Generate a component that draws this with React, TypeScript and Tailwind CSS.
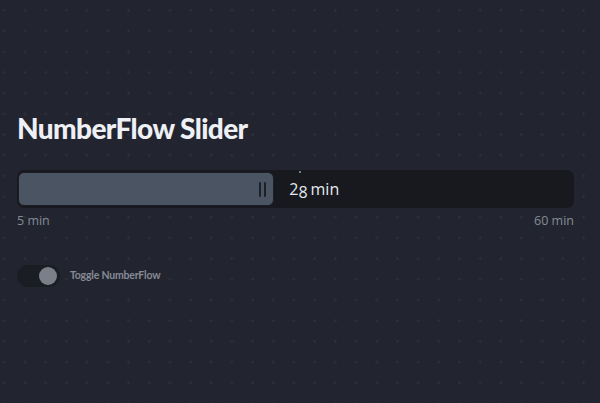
import React, { useState } from "react";

const App = () => {
  const [on, setOn] = useState(false);
  const fill = 46;

  return (
    <div className="min-h-[403px] w-full bg-[#22252f] bg-[radial-gradient(circle,#2c303b_1px,transparent_1.5px)] bg-[size:20.7px_20.7px] bg-[position:-6px_0px] font-['Open_Sans',sans-serif]">
      <div className="pl-[17px] pr-[26px] pt-[111px]">
        <h1 className="font-['Lato',sans-serif] text-[28px] font-black leading-[34px] tracking-[-0.6px] text-[#eef0f6]">
          NumberFlow Slider
        </h1>

        {/* slider */}
        <div className="mt-[25px]">
          <div className="relative flex h-[38px] w-full items-center rounded-[7px] bg-[#17191e]">
            <div
              className="absolute left-[1px] top-[2px] bottom-[2px] flex items-center justify-end rounded-[6px] border border-[#1b1e24] bg-[#4a5462] pr-[7px]"
              style={{ width: `${fill}%` }}
            >
              <div className="flex gap-[3px]">
                <span className="h-[15px] w-[2px] rounded-sm bg-[#1d2027]" />
                <span className="h-[15px] w-[2px] rounded-sm bg-[#1d2027]" />
              </div>
            </div>
            <div
              className="absolute top-0 bottom-0 flex items-center text-[16px] font-medium text-[#e6e8ee]"
              style={{ left: `calc(${fill}% + 16px)` }}
            >
              <span className="relative">
                2
                <span className="relative top-[3px]">8</span>
                <span className="absolute left-[10px] top-[-6px] h-[2px] w-[2px] rounded-full bg-[#9aa0ab]" />
              </span>
              <span className="ml-[3px]">min</span>
            </div>
          </div>
          <div className="mt-[4px] flex justify-between text-[12.5px] text-[#868b96]">
            <span>5 min</span>
            <span>60 min</span>
          </div>
        </div>

        {/* toggle */}
        <div className="mt-[34px] flex items-center gap-[10px]">
          <button
            onClick={() => setOn(!on)}
            className={`relative h-[22px] w-[43px] rounded-full ${on ? "bg-[#4a5462]" : "bg-[#1b1d24]"}`}
          >
            <span
              className={`absolute top-[2px] h-[18px] w-[18px] rounded-full bg-[#7b7f8a] ${on ? "left-[3px]" : "left-[22px]"}`}
            />
          </button>
          <span className="font-['Lato',sans-serif] text-[10.5px] font-bold tracking-[-0.2px] text-[#868a95]">
            Toggle NumberFlow
          </span>
        </div>
      </div>
    </div>
  );
};

export default App;
